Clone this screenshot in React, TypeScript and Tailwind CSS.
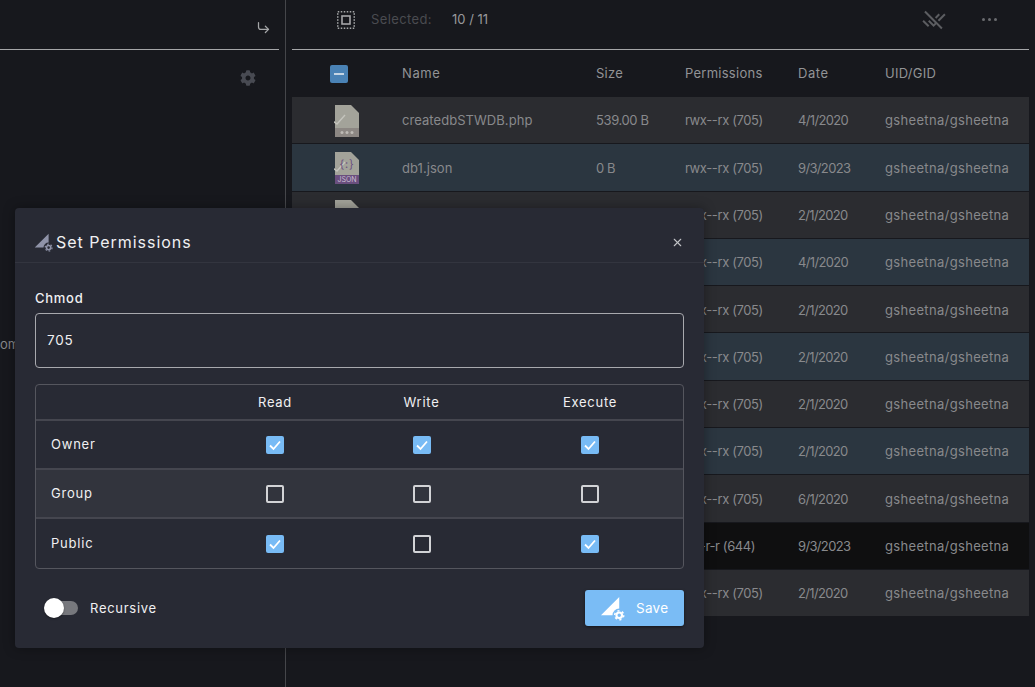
import { CornerDownRight, X } from "lucide-react"
import { FaCog } from "react-icons/fa"
import { MdRemoveDone } from "react-icons/md"

// rows 3-11 sit behind the dialog, so only their right hand columns show
const rows = [
  { name: "createdbSTWDB.php", size: "539.00 B", perm: "rwx--rx (705)", date: "4/1/2020", tone: "bg-[#2b2c30]", json: false },
  { name: "db1.json", size: "0 B", perm: "rwx--rx (705)", date: "9/3/2023", tone: "bg-[#2b3640]", json: true },
  { name: "", size: "", perm: "rwx--rx (705)", date: "2/1/2020", tone: "bg-[#2b2c30]", json: false },
  { name: "", size: "", perm: "rwx--rx (705)", date: "4/1/2020", tone: "bg-[#2b3640]", json: false },
  { name: "", size: "", perm: "rwx--rx (705)", date: "2/1/2020", tone: "bg-[#2b2c30]", json: false },
  { name: "", size: "", perm: "rwx--rx (705)", date: "2/1/2020", tone: "bg-[#2b3640]", json: false },
  { name: "", size: "", perm: "rwx--rx (705)", date: "2/1/2020", tone: "bg-[#2b2c30]", json: false },
  { name: "", size: "", perm: "rwx--rx (705)", date: "2/1/2020", tone: "bg-[#2b3640]", json: false },
  { name: "", size: "", perm: "rwx--rx (705)", date: "6/1/2020", tone: "bg-[#2b2c30]", json: false },
  { name: "", size: "", perm: "rw-r-r (644)", date: "9/3/2023", tone: "bg-[#0f0f10]", json: false },
  { name: "", size: "", perm: "rwx--rx (705)", date: "2/1/2020", tone: "bg-[#2b2c30]", json: false },
]

const perms = [
  { label: "Owner", values: [true, true, true], tone: "" },
  { label: "Group", values: [false, false, false], tone: "bg-[#32343d]" },
  { label: "Public", values: [true, false, true], tone: "" },
]

function FileIcon({ json }: { json: boolean }) {
  return (
    <div className="relative w-[26px] h-[32px]">
      <svg viewBox="0 0 26 32" className="w-[26px] h-[32px]">
        <path d="M1 0H17L25 8V32H1Z" fill="#a3a39a" />
        {json ? (
          <rect x="1" y="23" width="24" height="9" fill="#6a4f7e" />
        ) : (
          <>
            <rect x="1" y="23" width="24" height="9" fill="#8c8783" />
            <circle cx="8" cy="27.5" r="1.5" fill="#bdbab5" />
            <circle cx="13" cy="27.5" r="1.5" fill="#bdbab5" />
            <circle cx="18" cy="27.5" r="1.5" fill="#bdbab5" />
          </>
        )}
        <path d="M-1 16L3 19L11 10" fill="none" stroke="#c4c4bd" strokeWidth="1.4" />
      </svg>
      {json && (
        <>
          <span className="absolute left-0 right-0 top-[6px] text-center text-[11px] leading-[13px] tracking-[0.08em] text-[#6a4f7e]">
            {"{:}"}
          </span>
          <span className="absolute left-0 right-0 bottom-0 text-center text-[7px] leading-[9px] tracking-normal text-[#c9bdd2]">
            JSON
          </span>
        </>
      )}
    </div>
  )
}

function PermIcon({ className }: { className: string }) {
  return (
    <svg viewBox="0 0 26 26" className={className} fill="currentColor">
      <path d="M1 20L20 1V13A7 7 0 0 0 13 20Z" />
      <circle cx="20" cy="20" r="2.9" fill="none" stroke="currentColor" strokeWidth="2.2" />
      <circle cx="20" cy="20" r="4.7" fill="none" stroke="currentColor" strokeWidth="1.6" strokeDasharray="2.2 2.7" />
    </svg>
  )
}

function Check({ on }: { on: boolean }) {
  if (!on) {
    return <div className="w-[18px] h-[18px] rounded-[2px] border-2 border-[#d2d3d6]" />
  }
  return (
    <div className="w-[18px] h-[18px] rounded-[2px] bg-[#78bbf5] flex items-center justify-center">
      <svg viewBox="0 0 18 18" className="w-[18px] h-[18px]">
        <path d="M4 9.5L7.5 13L14 5.5" fill="none" stroke="#fff" strokeWidth="1.8" />
      </svg>
    </div>
  )
}

export default function App() {
  return (
    <div className="relative w-[1035px] h-[687px] overflow-hidden flex bg-[#17181d] font-['Inter',sans-serif] tracking-[0.045em]">
      {/* Left tree panel */}
      <aside className="w-[286px] shrink-0 border-r border-[#45464a] pr-[6px]">
        <div className="h-[49px] flex items-center justify-end pr-[8px] text-[#a5a6a8] border-b border-[#a5a6a8] box-content">
          <CornerDownRight className="w-[15px] h-[15px] mt-[5px]" strokeWidth={2} />
        </div>
        <div className="flex justify-end pr-[23px] pt-[20px] text-[#484a52]">
          <FaCog className="w-[16px] h-[16px]" />
        </div>
        <p className="mt-[250px] text-[13px] leading-[16px] tracking-normal text-[#85868a]">om</p>
      </aside>

      {/* File list */}
      <main className="flex-1 pl-[6px] pr-[6px]">
        <div className="h-[49px] flex items-center pl-[45px] pr-[32px] border-b border-[#a5a6a8] box-content text-[13px]">
          <svg viewBox="0 0 18 18" className="w-[18px] h-[18px] -mt-[10px]" fill="none" stroke="#a5a6a8">
            <rect x="0.75" y="0.75" width="16.5" height="16.5" strokeWidth="1.5" strokeDasharray="1.5 1.5" />
            <rect x="5" y="5" width="8" height="8" strokeWidth="1.6" />
          </svg>
          <span className="ml-[16px] -mt-[10px] tracking-[0.03em] text-[#4a4b50]">Selected:</span>
          <span className="ml-[20px] -mt-[10px] tracking-normal text-[#98999c]">10 / 11</span>
          <MdRemoveDone className="ml-auto -mt-[10px] w-[24px] h-[24px] text-[#5c5d61]" />
          <div className="ml-[36px] -mt-[10px] flex gap-[3px]">
            <span className="w-[3px] h-[3px] rounded-full bg-[#6a6b6f]" />
            <span className="w-[3px] h-[3px] rounded-full bg-[#6a6b6f]" />
            <span className="w-[3px] h-[3px] rounded-full bg-[#6a6b6f]" />
          </div>
        </div>

        <div className="h-[47px] grid grid-cols-[110px_194px_89px_113px_87px_1fr] items-center text-[13px] tracking-[0.02em] text-[#929396]">
          <div className="pl-[38px]">
            <div className="w-[18px] h-[18px] rounded-[2px] bg-[#4a82b5] flex items-center justify-center">
              <span className="w-[10px] h-[2px] bg-[#c5d5e4]" />
            </div>
          </div>
          <span className="tracking-[0.045em]">Name</span>
          <span>Size</span>
          <span>Permissions</span>
          <span className="tracking-[0.045em]">Date</span>
          <span>UID/GID</span>
        </div>

        <div className="flex flex-col gap-[1px]">
          {rows.map((row, i) => (
            <div
              key={i}
              className={`h-[46.3px] pt-[2px] grid grid-cols-[110px_194px_89px_113px_87px_1fr] items-center text-[13px] text-[#88898c] ${row.tone}`}
            >
              <div className="pl-[42px]">
                <FileIcon json={row.json} />
              </div>
              <span className="tracking-[0.004em]">{row.name}</span>
              <span className="tracking-[-0.03em]">{row.size}</span>
              <span className="tracking-[-0.03em]">{row.perm}</span>
              <span className="tracking-[-0.05em]">{row.date}</span>
              <span className="tracking-[0.026em]">gsheetna/gsheetna</span>
            </div>
          ))}
        </div>
      </main>

      {/* Set Permissions dialog */}
      <div className="absolute left-[15px] top-[208px] w-[689px] h-[440px] rounded-[4px] bg-[#282a34] text-[#f0f0f2] shadow-[0_0_12px_rgba(0,0,0,0.35)]">
        <div className="h-[55px] flex items-center pl-[20px] pr-[20px] pt-[14px] border-b border-[#33353f] box-border">
          <PermIcon className="w-[19px] h-[19px] text-[#8f93a8] -ml-[1px]" />
          <span className="ml-[3px] text-[16px] tracking-[0.06em]">Set Permissions</span>
          <X className="ml-auto w-[13px] h-[13px] text-[#c2c3c7]" strokeWidth={2} />
        </div>

        <div className="px-[20px]">
          <label className="block mt-[27px] text-[13px] leading-[16px] font-medium">Chmod</label>
          <div className="mt-[7px] h-[55px] flex items-center pl-[11px] rounded-[4px] border border-[#a8a9ae] text-[13.5px]">
            705
          </div>

          <div className="mt-[16px] rounded-[4px] border border-[#55565e] text-[13px]">
            <div className="h-[36px] pt-[2px] grid grid-cols-[173px_132px_161px_176px] items-center border-b-2 border-[#45464f]">
              <span />
              <span className="text-center">Read</span>
              <span className="text-center">Write</span>
              <span className="text-center">Execute</span>
            </div>
            {perms.map((perm, i) => (
              <div
                key={perm.label}
                className={`h-[49px] grid grid-cols-[173px_132px_161px_176px] items-center ${perm.tone} ${i < 2 ? "border-b-2 border-[#45464f]" : ""}`}
              >
                <span className="pl-[15px] tracking-[0.06em]">{perm.label}</span>
                {perm.values.map((on, j) => (
                  <div key={j} className="flex justify-center">
                    <Check on={on} />
                  </div>
                ))}
              </div>
            ))}
          </div>

          <div className="mt-[21px] flex items-center">
            <div className="relative ml-[10px] w-[33px] h-[14px] rounded-full bg-[#77787d]">
              <span className="absolute -left-[1px] -top-[3px] w-[20px] h-[20px] rounded-full bg-white shadow-[0_1px_2px_rgba(0,0,0,0.4)]" />
            </div>
            <span className="ml-[12px] pt-[2px] text-[13px]">Recursive</span>
            <button className="ml-auto w-[99px] h-[36px] flex items-center pl-[15px] rounded-[3px] bg-[#7abcf5] text-white text-[13.5px] tracking-[0.02em] shadow-[0_1px_3px_rgba(0,0,0,0.5)]">
              <PermIcon className="w-[25px] h-[25px]" />
              <span className="ml-[11px] pt-[1px]">Save</span>
            </button>
          </div>
        </div>
      </div>
    </div>
  )
}
